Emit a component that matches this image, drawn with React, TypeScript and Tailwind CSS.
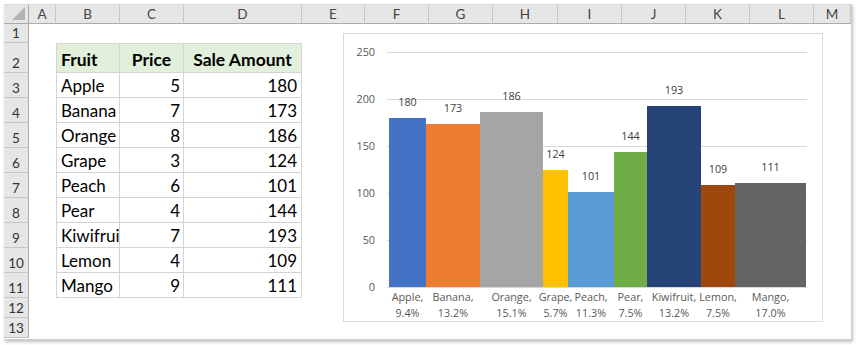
import React from "react";

type Col = { key: string; w: string };

const cols: Col[] = [
  { key: "A", w: "w-[27px]" },
  { key: "B", w: "w-[64px]" },
  { key: "C", w: "w-[64px]" },
  { key: "D", w: "w-[118px]" },
  { key: "E", w: "w-[63px]" },
  { key: "F", w: "w-[64px]" },
  { key: "G", w: "w-[64px]" },
  { key: "H", w: "w-[65px]" },
  { key: "I", w: "w-[64px]" },
  { key: "J", w: "w-[64px]" },
  { key: "K", w: "w-[64px]" },
  { key: "L", w: "w-[64px]" },
  { key: "M", w: "w-[37px]" },
];

const rowHeights: Record<number, string> = {
  1: "h-[19px]",
  2: "h-[30px]",
  12: "h-[20px]",
  13: "h-[20px]",
};

const fruits = [
  { name: "Apple", price: 5, amount: 180, share: "9.4%", color: "#4472C4", x0: 45, x1: 82 },
  { name: "Banana", price: 7, amount: 173, share: "13.2%", color: "#ED7D31", x0: 82, x1: 136 },
  { name: "Orange", price: 8, amount: 186, share: "15.1%", color: "#A5A5A5", x0: 136, x1: 199 },
  { name: "Grape", price: 3, amount: 124, share: "5.7%", color: "#FFC000", x0: 199, x1: 224 },
  { name: "Peach", price: 6, amount: 101, share: "11.3%", color: "#5B9BD5", x0: 224, x1: 270 },
  { name: "Pear", price: 4, amount: 144, share: "7.5%", color: "#70AD47", x0: 270, x1: 303 },
  { name: "Kiwifruit", price: 7, amount: 193, share: "13.2%", color: "#264478", x0: 303, x1: 357 },
  { name: "Lemon", price: 4, amount: 109, share: "7.5%", color: "#9E480E", x0: 357, x1: 391 },
  { name: "Mango", price: 9, amount: 111, share: "17.0%", color: "#636363", x0: 391, x1: 462 },
];

const yOf = (v: number) => 253 - 0.94 * v;

function Corner() {
  return (
    <div className="relative h-full w-[25px] border-r border-b border-r-[#ababab] border-b-[#ababab] bg-[#e6e6e6]">
      <svg className="absolute bottom-[3px] right-[3px]" width="13" height="13" viewBox="0 0 13 13">
        <polygon points="13,0 13,13 0,13" fill="#b4b4b4" />
      </svg>
    </div>
  );
}

function Cell({ col, row }: { col: string; row: number }) {
  const inTable = row >= 2 && row <= 11 && (col === "B" || col === "C" || col === "D");
  if (!inTable) return null;
  const header = row === 2;
  const f = fruits[row - 3];
  const border = `border-r border-b border-[#d4d4d4] ${header ? "border-t" : ""} ${col === "B" ? "border-l" : ""}`;
  const bg = header ? "bg-[#e2efda]" : "bg-white";
  let text: React.ReactNode = null;
  let align = "justify-start pl-[4px]";
  if (header) {
    text = col === "B" ? "Fruit" : col === "C" ? "Price" : "Sale Amount";
    align = col === "B" ? "justify-start pl-[4px]" : "justify-center";
  } else if (col === "B") {
    text = f.name;
  } else {
    text = col === "C" ? f.price : f.amount;
    align = col === "C" ? "justify-end pr-[3px]" : "justify-end pr-[4px]";
  }
  return (
    <div
      className={`absolute inset-0 flex items-end overflow-hidden whitespace-nowrap pb-[2px] leading-[19px] text-black ${border} ${bg} ${align} ${header ? "text-[17.5px] font-bold pb-[3px]" : "text-[17px]"}`}
    >
      {text}
    </div>
  );
}

function Chart() {
  const ticks = [0, 50, 100, 150, 200, 250];
  return (
    <div className="absolute left-[343px] top-[33px] h-[289px] w-[480px] border border-[#d9d9d9] bg-white">
      <svg width="478" height="287" viewBox="0 0 478 287" style={{ fontFamily: '"Open Sans", sans-serif' }}>
        {ticks.map((t) => (
          <g key={t}>
            <line x1="43" x2="463" y1={Math.round(yOf(t)) + 0.5} y2={Math.round(yOf(t)) + 0.5} stroke="#d9d9d9" strokeWidth="1" />
            <text x="31" y={yOf(t) + 4} textAnchor="end" fontSize="10.8" fill="#595959">
              {t}
            </text>
          </g>
        ))}
        {fruits.map((f) => {
          const cx = (f.x0 + f.x1) / 2;
          const top = Math.round(yOf(f.amount));
          return (
            <g key={f.name}>
              <rect x={f.x0} y={top} width={f.x1 - f.x0} height={253 - top} fill={f.color} />
              <text x={cx} y={top - 12.5} textAnchor="middle" fontSize="10.8" fill="#404040">
                {f.amount}
              </text>
              <text x={cx} y="267" textAnchor="middle" fontSize="10.8" fill="#595959">
                {f.name},
              </text>
              <text x={cx} y="283" textAnchor="middle" fontSize="10.8" fill="#595959">
                {f.share}
              </text>
            </g>
          );
        })}
        <line x1="43" x2="463" y1="253.5" y2="253.5" stroke="#d9d9d9" strokeWidth="1" />
      </svg>
    </div>
  );
}

export default function App() {
  const rows = Array.from({ length: 13 }, (_, i) => i + 1);
  return (
    <div className="h-[345px] w-[856px] bg-white pl-[4px] pt-[4px]" style={{ fontFamily: "Lato, sans-serif" }}>
      <div className="relative w-[848px] border-r border-b border-[#d0d0d0] bg-white shadow-[1px_2px_3px_rgba(0,0,0,0.25)]">
        <div className="flex h-[20px] border-t border-[#dadada]">
          <Corner />
          {cols.map((c) => (
            <div
              key={c.key}
              className={`${c.w} flex h-full shrink-0 items-center justify-center border-r border-b border-r-[#c6c6c6] border-b-[#ababab] bg-[#e6e6e6] text-[13.5px] text-[#444]`}
            >
              {c.key}
            </div>
          ))}
        </div>
        {rows.map((r) => (
          <div key={r} className={`flex ${rowHeights[r] ?? "h-[25px]"}`}>
            <div className="flex w-[25px] shrink-0 items-end justify-center border-r border-b border-r-[#ababab] border-b-[#c6c6c6] bg-[#e6e6e6] pb-[1px] text-[13.5px] leading-[16px] text-[#333]">
              {r}
            </div>
            {cols.map((c) => (
              <div key={c.key} className={`${c.w} relative h-full shrink-0`}>
                <Cell col={c.key} row={r} />
              </div>
            ))}
          </div>
        ))}
        <div className="h-[1px]" />
        <div className="absolute -left-[4px] -top-[4px]">
          <Chart />
        </div>
      </div>
    </div>
  );
}
